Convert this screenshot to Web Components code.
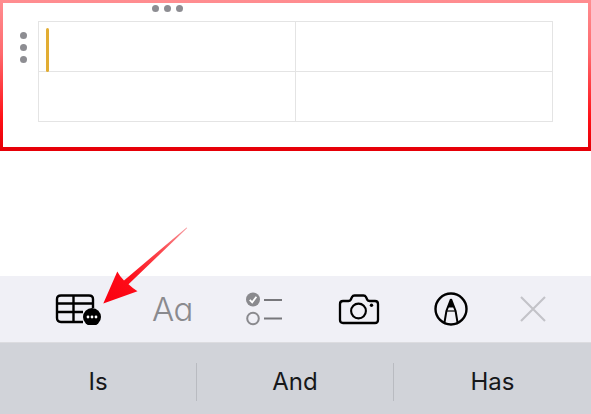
<!DOCTYPE html>
<html>
<head>
<meta charset="utf-8">
<style>
    html, body { margin: 0; padding: 0; background: white; }
    body { width: 591px; height: 414px; overflow: hidden; font-family: Inter, "Liberation Sans", sans-serif; }
</style>
</head>
<body>
<notes-screen>
    <note-frame slot="editor"></note-frame>
    <format-toolbar slot="toolbar"></format-toolbar>
    <suggestion-bar slot="suggestions">
        <suggestion-word>Is</suggestion-word>
        <suggestion-word>And</suggestion-word>
        <suggestion-word>Has</suggestion-word>
    </suggestion-bar>
</notes-screen>
<script>
class notes_screen extends HTMLElement {
    constructor() {
        super();
        this.attachShadow({ mode: 'open' });
        this.shadowRoot.innerHTML = `
        <style>
        :host { display: flex; flex-direction: column; position: relative; width: 591px; height: 414px; }
        #gap { height: 125px; }
        svg { position: absolute; left: 100px; top: 225px; }
        </style>
        <slot name="editor"></slot>
        <div id="gap"></div>
        <slot name="toolbar"></slot>
        <slot name="suggestions"></slot>
        <svg width="90" height="82" viewBox="100 225 90 82">
            <defs>
                <linearGradient id="arrow_fill" x1="187" y1="228" x2="104" y2="303" gradientUnits="userSpaceOnUse">
                    <stop offset="0" stop-color="#f79a9f"/>
                    <stop offset="0.3" stop-color="#fb4a50"/>
                    <stop offset="0.7" stop-color="#fe0c18"/>
                    <stop offset="1" stop-color="#fa0010"/>
                </linearGradient>
            </defs>
            <path d="M187.2 228 L128.5 284.3 Q133 288.6 137.5 291.2 L103.3 303.6 L117.3 271.5 Q120 276.8 124 280.4 L186.6 227.4 Z" fill="url(#arrow_fill)"/>
        </svg>`;
    }
}

class drag_dots extends HTMLElement {
    constructor() {
        super();
        this.attachShadow({ mode: 'open' });
        this.shadowRoot.innerHTML = `
        <style>
        :host { display: flex; gap: 5px; flex-direction: var(--dots-direction, row); }
        i { display: block; width: 7px; height: 7px; border-radius: 50%; background: #8d8d92; }
        </style>
        <i></i><i></i><i></i>`;
    }
}

class table_grid extends HTMLElement {
    constructor() {
        super();
        this.attachShadow({ mode: 'open' });
        this.shadowRoot.innerHTML = `
        <style>
        :host {
            display: grid;
            grid-template-columns: 256px 256px;
            grid-template-rows: 49px 49px;
            gap: 1px;
            background: #e4e4e4;
            border: 1px solid #e4e4e4;
            position: relative;
        }
        div { background: white; }
        #caret {
            position: absolute;
            left: 6.5px;
            top: 6px;
            width: 3px;
            height: 44px;
            border-radius: 1.5px;
            background: #e2ad33;
        }
        </style>
        <div></div><div></div><div></div><div></div>
        <span id="caret"></span>`;
    }
}

class note_frame extends HTMLElement {
    constructor() {
        super();
        this.attachShadow({ mode: 'open' });
        this.shadowRoot.innerHTML = `
        <style>
        :host {
            display: block;
            position: relative;
            box-sizing: border-box;
            height: 151px;
            border-style: solid;
            border-width: 3px 3px 4px 3px;
            border-image: linear-gradient(to bottom, #ff8d90 0%, #ff6a6e 35%, #ff1016 80%, #e60008 100%) 1;
            background: white;
        }
        #top_dots { position: absolute; left: 148.5px; top: 1.5px; }
        #side_dots { position: absolute; left: 17px; top: 29px; --dots-direction: column; }
        table-grid { position: absolute; left: 35px; top: 18px; }
        </style>
        <drag-dots id="top_dots"></drag-dots>
        <drag-dots id="side_dots"></drag-dots>
        <table-grid></table-grid>`;
    }
}

class format_toolbar extends HTMLElement {
    constructor() {
        super();
        this.attachShadow({ mode: 'open' });
        this.shadowRoot.innerHTML = `
        <style>
        :host {
            display: flex;
            align-items: center;
            box-sizing: border-box;
            height: 67px;
            padding-left: 55px;
            background: #f0f0f6;
            border-bottom: 1px solid #dcdce0;
        }
        svg { display: block; flex: none; }
        #font_button {
            margin-left: 49px;
            width: 42px;
            font-family: Inter, "Liberation Sans", sans-serif;
            font-feature-settings: "cv11" 1;
            font-size: 33px;
            font-weight: 300;
            line-height: 40px;
            letter-spacing: -0.5px;
            color: #8a8a8e;
        }
        </style>
        <svg width="48" height="32" viewBox="0 0 48 32">
            <path d="M28 29 H6 Q2 29 2 25 V6 Q2 2.5 6 2.5 H34 Q38 2.5 38 6 V15 M2 10.5 H38 M2 19 H28 M18.5 2.5 V29" fill="none" stroke="#000" stroke-width="2.4"/>
            <circle cx="37" cy="24" r="9" fill="#000"/>
            <circle cx="33" cy="24" r="1.4" fill="#fff"/>
            <circle cx="37" cy="24" r="1.4" fill="#fff"/>
            <circle cx="41" cy="24" r="1.4" fill="#fff"/>
        </svg>
        <span id="font_button">Aa</span>
        <svg width="38" height="34" viewBox="0 0 38 34" style="margin-left:51px">
            <circle cx="8" cy="7.5" r="7" fill="#8a8a8e"/>
            <path d="M4.7 7.8 L7.2 10.4 L11.4 4.8" fill="none" stroke="#fff" stroke-width="1.8"/>
            <path d="M19 8 H37 M19 26.5 H37" stroke="#77777b" stroke-width="2"/>
            <circle cx="8" cy="26.5" r="5.8" fill="none" stroke="#8a8a8e" stroke-width="2"/>
        </svg>
        <svg width="42" height="32" viewBox="0 0 42 32" style="margin-left:55px">
            <path d="M5 8 H10.5 Q12 8 12.8 6.6 L14 4 Q14.8 2.5 16.5 2.5 H25.5 Q27.2 2.5 28 4 L29.2 6.6 Q30 8 31.5 8 H37 Q40 8 40 11 V27 Q40 30 37 30 H5 Q2 30 2 27 V11 Q2 8 5 8 Z" fill="none" stroke="#000" stroke-width="2.3"/>
            <circle cx="20.5" cy="18" r="7.4" fill="none" stroke="#000" stroke-width="2.1"/>
            <circle cx="33.5" cy="12.2" r="1.7" fill="#000"/>
        </svg>
        <svg width="36" height="36" viewBox="0 0 36 36" style="margin-left:53px">
            <circle cx="18" cy="18" r="15.5" fill="none" stroke="#000" stroke-width="2.4"/>
            <path d="M18 8 L22.6 20 L24.6 32 M18 8 L13.4 20 L11.4 32" fill="none" stroke="#000" stroke-width="2"/>
            <path d="M18 8 L21 16.5 H15 Z" fill="#000"/>
            <path d="M13.4 20 H22.6" stroke="#000" stroke-width="1.2"/>
        </svg>
        <svg width="28" height="28" viewBox="0 0 28 28" style="margin-left:50px">
            <path d="M2 2 L26 26 M26 2 L2 26" stroke="#c3c3c8" stroke-width="2.1"/>
        </svg>`;
    }
}

class suggestion_bar extends HTMLElement {
    constructor() {
        super();
        this.attachShadow({ mode: 'open' });
        this.shadowRoot.innerHTML = `
        <style>
        :host {
            display: grid;
            grid-template-columns: 196px 197px 198px;
            box-sizing: border-box;
            height: 71px;
            padding-top: 6px;
            align-items: center;
            background: #d1d3d9;
        }
        </style>
        <slot></slot>`;
    }
}

class suggestion_word extends HTMLElement {
    constructor() {
        super();
        this.attachShadow({ mode: 'open' });
        this.shadowRoot.innerHTML = `
        <style>
        :host {
            display: flex;
            align-items: center;
            justify-content: center;
            height: 38px;
            font-family: Inter, "Liberation Sans", sans-serif;
            font-size: 24px;
            color: #17181a;
            border-left: 1px solid #b9bbc1;
        }
        :host(:first-child) { border-left: none; }
        </style>
        <slot></slot>`;
    }
}

customElements.define("notes-screen", notes_screen);
customElements.define("drag-dots", drag_dots);
customElements.define("table-grid", table_grid);
customElements.define("note-frame", note_frame);
customElements.define("format-toolbar", format_toolbar);
customElements.define("suggestion-bar", suggestion_bar);
customElements.define("suggestion-word", suggestion_word);
</script>
</body>
</html>
